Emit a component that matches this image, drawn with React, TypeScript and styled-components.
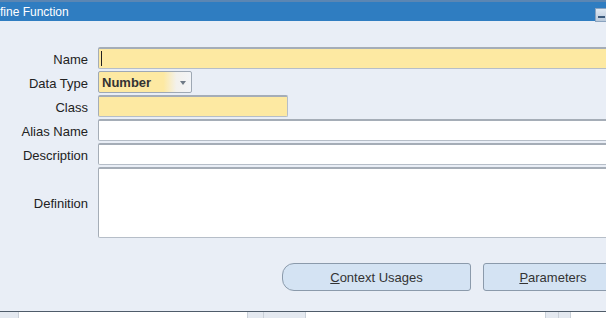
import React from "react";
import styled, { createGlobalStyle } from "styled-components";

const GlobalStyle = createGlobalStyle`
  html, body {
    margin: 0;
    padding: 0;
    background: #e9eef6;
    overflow: hidden;
  }
  body {
    font-family: "Liberation Sans", Arial, sans-serif;
  }
`;

const Window = styled.div`
  width: 606px;
  height: 318px;
  display: flex;
  flex-direction: column;
  background: #e9eef6;
  overflow: hidden;
`;

const TitleBar = styled.div`
  height: 19px;
  border-top: 2px solid #5b86b3;
  background: #2f7dc1;
  display: flex;
  align-items: center;
  justify-content: space-between;
`;

const Title = styled.span`
  color: #ffffff;
  font-size: 12px;
  white-space: nowrap;
  padding-top: 1px;
`;

const MinButton = styled.span`
  width: 10px;
  height: 12px;
  margin-top: 6px;
  background: linear-gradient(#dfe8f2, #b9c9db);
  border: 1px solid #8aa3bf;
  border-right: none;
  display: flex;
  align-items: flex-end;
  justify-content: center;
  &::after {
    content: "";
    width: 7px;
    height: 2px;
    margin-bottom: 3px;
    background: #3c5a7c;
  }
`;

const Body = styled.div`
  flex: 1;
  padding-top: 26px;
  display: flex;
  flex-direction: column;
`;

const Form = styled.div`
  display: grid;
  grid-template-columns: 88px 520px;
  column-gap: 10px;
  row-gap: 2px;
  align-items: center;
`;

const Label = styled.label`
  font-size: 13px;
  color: #222;
  text-align: right;
  white-space: nowrap;
  padding-top: 2px;
`;

const Field = styled.div<{ $yellow?: boolean; $width?: number; $height?: number }>`
  box-sizing: border-box;
  height: ${(p) => p.$height ?? 22}px;
  width: ${(p) => (p.$width ? `${p.$width}px` : "100%")};
  background: ${(p) => (p.$yellow ? "#fde9a2" : "#ffffff")};
  border: 1px solid #b6bec8;
  border-top: 2px solid #a5adb7;
  border-left-color: #a5adb7;
  border-radius: 2px;
  display: flex;
  align-items: center;
  padding-left: 2px;
`;

const Caret = styled.span`
  width: 1px;
  height: 15px;
  background: #222;
`;

const Select = styled.div`
  box-sizing: border-box;
  width: 94px;
  height: 22px;
  border: 1px solid #9ea8b4;
  border-radius: 2px;
  display: flex;
  background: linear-gradient(90deg, #fde9a2 0, #fde9a2 70%, #f3f1ec 84%, #f2f4f7 100%);
`;

const SelectValue = styled.span`
  flex: 1;
  font-size: 13px;
  font-weight: bold;
  color: #333;
  display: flex;
  align-items: center;
  padding-left: 3px;
`;

const SelectArrow = styled.span`
  width: 16px;
  display: flex;
  align-items: center;
  justify-content: center;
  &::after {
    content: "";
    border-left: 3px solid transparent;
    border-right: 3px solid transparent;
    border-top: 4px solid #6f7a86;
    margin-top: 1px;
  }
`;

const ButtonRow = styled.div`
  display: flex;
  gap: 12px;
  margin-top: 25px;
  padding-left: 282px;
`;

const Button = styled.button<{ $round?: boolean; $width: number }>`
  box-sizing: border-box;
  flex: none;
  width: ${(p) => p.$width}px;
  height: 28px;
  background: #d4e3f3;
  border: 1px solid #8b9aab;
  border-radius: ${(p) => (p.$round ? "12px 3px 3px 12px" : "3px")};
  font-family: "Liberation Sans", Arial, sans-serif;
  font-size: 13px;
  color: #333;
  padding: 0;
  u {
    text-decoration: underline;
  }
`;

const TableStrip = styled.div`
  margin-top: auto;
  height: 6px;
  border-top: 1px solid #4f5c6a;
  display: flex;
`;

const Cell = styled.div<{ $width: number; $gray?: boolean }>`
  flex: none;
  width: ${(p) => p.$width}px;
  background: ${(p) => (p.$gray ? "#e4e9f0" : "#ffffff")};
  border-right: 1px solid #c9d0d8;
`;

export default function App() {
  return (
    <Window>
      <GlobalStyle />
      <TitleBar>
        <Title>fine Function</Title>
        <MinButton />
      </TitleBar>
      <Body>
        <Form>
          <Label>Name</Label>
          <Field $yellow>
            <Caret />
          </Field>
          <Label>Data Type</Label>
          <Select>
            <SelectValue>Number</SelectValue>
            <SelectArrow />
          </Select>
          <Label>Class</Label>
          <Field $yellow $width={190} />
          <Label>Alias Name</Label>
          <Field />
          <Label>Description</Label>
          <Field />
          <Label>Definition</Label>
          <Field $height={71} />
        </Form>
        <ButtonRow>
          <Button $round $width={189}>
            <u>C</u>ontext Usages
          </Button>
          <Button $width={140}>
            <u>P</u>arameters
          </Button>
        </ButtonRow>
        <TableStrip>
          <Cell $width={18} $gray />
          <Cell $width={228} />
          <Cell $width={15} $gray />
          <Cell $width={41} $gray />
          <Cell $width={239} />
          <Cell $width={12} $gray />
          <Cell $width={11} $gray />
          <Cell $width={40} />
        </TableStrip>
      </Body>
    </Window>
  );
}
